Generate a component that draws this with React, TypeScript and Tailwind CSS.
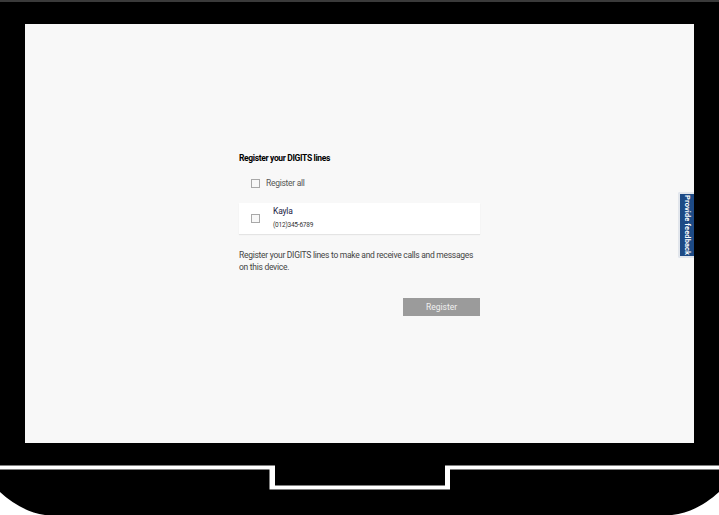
const Checkbox = () => (
  <span className="block w-[9px] h-[9px] shrink-0 border border-[#a8a8a8] bg-[#f8f8f8]" />
);

const LaptopBase = () => (
  <svg width="719" height="72" viewBox="0 0 719 72" className="block">
    <path
      d="M0 22.4 H275 V42.4 H445 V22.4 H719 V26.4 H450 V46.4 H269.5 V26.4 H0 Z"
      fill="#fff"
    />
    <path d="M0 49 C12 60 28 70 45 72 H0 Z" fill="#fff" />
    <path d="M719 49 C707 60 691 70 672 72 H719 Z" fill="#fff" />
  </svg>
);

const App = () => {
  return (
    <div className="w-[719px] h-[515px] overflow-hidden bg-black font-['Roboto',sans-serif] border-t-2 border-[#3a3a3a]">
      <div className="relative ml-[25px] mt-[22px] w-[669px] h-[419px] bg-[#f8f8f8] flex flex-col pl-[214px] pt-[129px]">
        <h1 className="text-[8.5px] leading-[11px] font-bold text-black tracking-[-0.35px]">
          Register your DIGITS lines
        </h1>

        <label className="flex items-center gap-[6px] ml-[12px] mt-[14px] h-[11px] text-[8.5px] tracking-[-0.28px] text-[#555]">
          <Checkbox />
          <span>Register all</span>
        </label>

        <div className="flex items-center w-[241px] h-[31px] mt-[14px] pb-[1px] bg-white shadow-[0_1px_1px_rgba(0,0,0,0.08)] pl-[12px]">
          <Checkbox />
          <div className="ml-[13px] -mt-[1px] flex flex-col">
            <span className="text-[8.5px] leading-[11px] tracking-[-0.2px] text-[#1c1c44]">Kayla</span>
            <span className="text-[6.5px] leading-[9px] tracking-[-0.2px] mt-[4px] text-[#333]">(012)345-6789</span>
          </div>
        </div>

        <p className="w-[241px] mt-[15px] text-[8.5px] leading-[12px] tracking-[-0.28px] text-[#444]">
          Register your DIGITS lines to make and receive calls and messages on this device.
        </p>

        <button className="self-start ml-[164px] mt-[25px] w-[77px] h-[18px] bg-[#9b9b9b] text-[#f0f0f0] text-[8.5px]">
          Register
        </button>

        <div className="absolute right-0 top-[168px] w-[16px] h-[66px] bg-[#1d4a85] border-2 border-[#e2e6ec] border-r-0 rounded-l-[2px] flex items-center justify-center">
          <span className="[writing-mode:vertical-rl] text-[7.5px] font-bold text-white whitespace-nowrap tracking-[0.1px]">
            Provide feedback
          </span>
        </div>
      </div>
      <LaptopBase />
    </div>
  );
};

export default App;
